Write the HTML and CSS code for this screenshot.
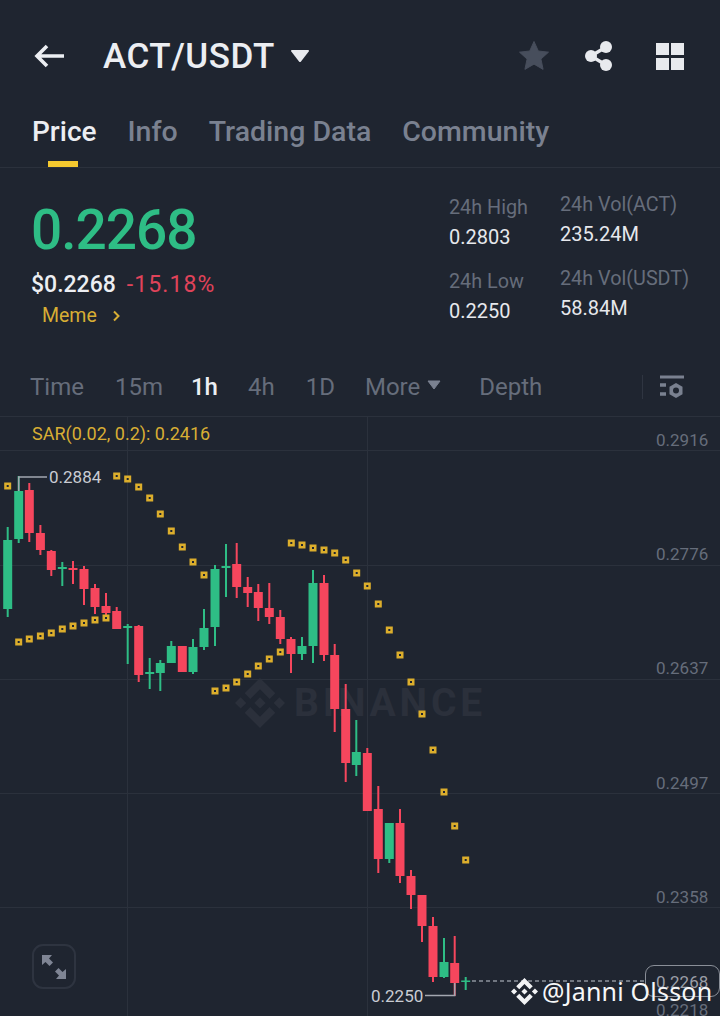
FILE: index.html
```html
<!DOCTYPE html>
<html lang="en">
  <head>
    <title>ACT/USDT</title>
    <meta charset="utf-8" />
    <meta name="viewport" content="width=device-width, initial-scale=1" />
    <link rel="stylesheet" href="styles.css">
  </head>

  <body>
    <header class="topbar">
      <svg class="back" width="32" height="26" viewBox="0 0 32 26">
        <path d="M30 13H4M13 3 3 13l10 10" fill="none" stroke="#eceef2" stroke-width="3.6" />
      </svg>
      <h1 class="pair">ACT/USDT</h1>
      <svg class="caret" width="20" height="14" viewBox="0 0 20 14">
        <path d="M2 1h16q1.500 0 .7 1.400L11 12.500q-1 1.200-2 0L1.300 2.400Q.5 1 2 1z" fill="#e8eaee" />
      </svg>
      <div class="actions">
        <svg class="star" width="30" height="31" viewBox="0 0 32 32">
          <path d="M16 1l4.600 10.200 10.900 1.200-8.100 7.400 2.300 11-9.700-5.600-9.700 5.600 2.300-11L.5 12.400l10.900-1.200z" fill="#474e5c" stroke="#474e5c" stroke-linejoin="round" />
        </svg>
        <svg class="share" width="29" height="32" viewBox="0 0 29 32">
          <path d="M22 7 7 16l15 9" fill="none" stroke="#e8eaee" stroke-width="3.4" />
          <circle cx="22" cy="7" r="6" fill="#e8eaee" />
          <circle cx="7" cy="16" r="6" fill="#e8eaee" />
          <circle cx="22" cy="25" r="6" fill="#e8eaee" />
        </svg>
        <div class="grid-icon"><i></i><i></i><i></i><i></i></div>
      </div>
    </header>

    <nav class="tabs">
      <a class="tab active">Price</a>
      <a class="tab">Info</a>
      <a class="tab">Trading Data</a>
      <a class="tab">Community</a>
    </nav>

    <section class="summary">
      <div class="quote">
        <div class="last">0.2268</div>
        <div class="fiat">
          <span class="usd">$0.2268</span>
          <span class="change">-15.18%</span>
        </div>
        <div class="tag">
          <span>Meme</span>
          <svg width="9" height="12" viewBox="0 0 9 12">
            <path d="M2 1.500 6.500 6 2 10.500" fill="none" stroke="#d8ae34" stroke-width="2" />
          </svg>
        </div>
      </div>
      <div class="stats">
        <div class="stat-col">
          <div class="stat">
            <span class="stat-label">24h High</span>
            <span class="stat-value">0.2803</span>
          </div>
          <div class="stat">
            <span class="stat-label">24h Low</span>
            <span class="stat-value">0.2250</span>
          </div>
        </div>
        <div class="stat-col col-vol">
          <div class="stat">
            <span class="stat-label">24h Vol(ACT)</span>
            <span class="stat-value">235.24M</span>
          </div>
          <div class="stat">
            <span class="stat-label">24h Vol(USDT)</span>
            <span class="stat-value">58.84M</span>
          </div>
        </div>
      </div>
    </section>

    <div class="intervals">
      <span class="iv iv-time">Time</span>
      <span class="iv iv-15m">15m</span>
      <span class="iv iv-1h active">1h</span>
      <span class="iv iv-4h">4h</span>
      <span class="iv iv-1d">1D</span>
      <span class="iv iv-more">More</span>
      <svg class="more-caret" width="14" height="10" viewBox="0 0 14 10">
        <path d="M1 1h12L7 9z" fill="#7a8190" stroke="#7a8190" stroke-linejoin="round" />
      </svg>
      <span class="iv iv-depth">Depth</span>
      <div class="iv-sep"></div>
      <svg width="24" height="24" viewBox="0 0 24 24">
        <path d="M0 2h24" stroke="#7a8190" stroke-width="3" />
        <path d="M0 10h6M0 19h6" stroke="#7a8190" stroke-width="3.500" />
        <path d="M16 8l6.500 3.800v7.400L16 23l-6.500-3.800v-7.400z" fill="#7a8190" />
        <circle cx="16" cy="15.500" r="3" fill="#1f2530" />
      </svg>
    </div>

    <div class="chart">
      <div class="watermark">
        <svg width="50" height="50" viewBox="0 0 24 24">
          <path class="bn" d="M16.624 13.920l2.718 2.715-7.353 7.353-7.353-7.352 2.718-2.716 4.635 4.659 4.636-4.659zm4.637-4.637L24 12l-2.715 2.716L18.568 12l2.693-2.716zm-9.272.001l2.716 2.691-2.716 2.718L9.272 12l2.717-2.716zm-9.272-.001L5.409 12l-2.691 2.692L0 12l2.717-2.716zM11.989.012l7.353 7.329-2.718 2.715-4.635-4.636-4.636 4.660-2.717-2.716 7.353-7.352z" />
        </svg>
        <span>BINANCE</span>
      </div>

      <svg id="plot" class="plot" width="720" height="599" viewBox="0 417 720 599"></svg>

      <div class="sar-label">SAR(0.02, 0.2): 0.2416</div>

      <div class="expand">
        <svg width="26" height="26" viewBox="0 0 26 26">
          <path d="M1 1h10L8 4.500l4 4L8.500 12l-4-4L1 11zM25 25H15l3-3.500-4-4 3.500-3.500 4 4L25 15z" fill="#7f8594" />
        </svg>
      </div>

      <div class="price-box">0.2268</div>

      <div class="credit">
        <svg width="27" height="27" viewBox="0 0 24 24">
          <path fill="#f2f3f5" d="M16.624 13.920l2.718 2.715-7.353 7.353-7.353-7.352 2.718-2.716 4.635 4.659 4.636-4.659zm4.637-4.637L24 12l-2.715 2.716L18.568 12l2.693-2.716zm-9.272.001l2.716 2.691-2.716 2.718L9.272 12l2.717-2.716zm-9.272-.001L5.409 12l-2.691 2.692L0 12l2.717-2.716zM11.989.012l7.353 7.329-2.718 2.715-4.635-4.636-4.636 4.660-2.717-2.716 7.353-7.352z" />
        </svg>
        <span>@Janni Olsson</span>
      </div>
    </div>

    <script src="chart.js"></script>
  </body>
</html>
```

FILE: styles.css
```css
* {
  box-sizing: border-box;
}

body {
  margin: 0;
  width: 720px;
  height: 1016px;
  overflow: hidden;
  background: #1f2530;
  color: #eceef2;
  font-family: Roboto, sans-serif;
}

.topbar {
  display: flex;
  align-items: center;
  height: 112px;
  padding: 0 36px 0 34px;
}

.pair {
  margin: 0 0 0 37px;
  font-size: 35px;
  font-weight: 500;
  letter-spacing: 0.5px;
}

.caret {
  margin-left: 15px;
}

.actions {
  display: flex;
  align-items: center;
  margin-left: auto;
}

.star {
  margin-bottom: 1px;
}

.share {
  margin: 0 43px 1px 35px;
}

.grid-icon {
  display: grid;
  grid-template-columns: 13px 13px;
  grid-template-rows: 12px 12px;
  gap: 3px 2px;
}

.grid-icon i {
  background: #e8eaee;
}

.tabs {
  display: flex;
  gap: 31px;
  height: 56px;
  padding: 3px 0 0 32px;
  border-bottom: 1px solid #2b313c;
}

.tab {
  position: relative;
  height: 40px;
  color: #7a8190;
  font-size: 28.5px;
  font-weight: 500;
}

.tab.active {
  color: #eceef2;
  font-size: 28px;
  line-height: 33px;
}

.tab.active::after {
  content: "";
  position: absolute;
  left: 16px;
  bottom: -12px;
  width: 30px;
  height: 6px;
  background: #f5c92f;
}

.summary {
  display: flex;
  justify-content: space-between;
  height: 192px;
  padding: 0 32px 0 31px;
}

.last {
  margin-top: 28px;
  color: #2ebd85;
  font-size: 55px;
  font-weight: 500;
  line-height: 68px;
  letter-spacing: -1px;
}

.fiat {
  display: flex;
  gap: 11px;
  margin-top: 8px;
  font-size: 23px;
  line-height: 26px;
}

.usd {
  font-weight: 500;
}

.change {
  color: #e0435a;
  letter-spacing: 1.100px;
}

.tag {
  display: flex;
  align-items: center;
  gap: 15px;
  margin: 6px 0 0 11px;
  color: #d8ae34;
  font-size: 19.500px;
  line-height: 24px;
}

.stats {
  display: flex;
  gap: 32px;
}

.stat-col {
  display: flex;
  flex-direction: column;
  gap: 20px;
  padding-top: 28px;
  width: 79px;
}

.col-vol {
  padding-top: 25px;
  width: 128px;
}

.stat {
  display: flex;
  flex-direction: column;
  gap: 4px;
}

.stat-label {
  color: #666d7b;
  font-size: 19.800px;
  line-height: 24px;
  white-space: nowrap;
}

.stat-value {
  font-size: 20px;
  line-height: 26px;
  color: #e6e8ec;
  white-space: nowrap;
}

.intervals {
  display: flex;
  align-items: center;
  height: 57px;
  padding: 0 36px 2px 30px;
  border-bottom: 1px solid #2b313c;
}

.iv {
  color: #666d7b;
  font-size: 24px;
}

.iv.active {
  color: #eceef2;
  font-weight: 500;
}

.iv-15m {
  margin-left: 31px;
}

.iv-1h {
  margin-left: 28px;
}

.iv-4h {
  margin-left: 30px;
}

.iv-1d {
  margin-left: 31px;
}

.iv-more {
  margin-left: 30px;
}

.more-caret {
  margin: 0 0 4px 7px;
}

.iv-depth {
  margin-left: 38px;
}

.iv-sep {
  width: 1px;
  height: 24px;
  margin: 0 17px 0 auto;
  background: #2f3541;
}

.chart {
  position: relative;
  height: 599px;
}

.plot {
  position: absolute;
  left: 0;
  top: 0;
}

.grid-line {
  stroke: #2b313c;
  stroke-width: 1;
}

.axis-text {
  fill: #666d7b;
  font-size: 17px;
}

.mark-text {
  fill: #c9ccd3;
  font-size: 17px;
}

.mark-line {
  fill: none;
  stroke: #a3a7b0;
  stroke-width: 1.500;
}

.sar-dot {
  fill: #1f2530;
  stroke: #dcae2c;
  stroke-width: 2.500;
}

.sar-label {
  position: absolute;
  left: 32px;
  top: 6px;
  color: #d8ae34;
  font-size: 18px;
}

.watermark {
  position: absolute;
  left: 235px;
  top: 261px;
  display: flex;
  align-items: center;
  gap: 9px;
  color: #2b303b;
  font-size: 39px;
  font-weight: 700;
  letter-spacing: 3.800px;
}

.bn {
  fill: #2b303b;
}

.expand {
  position: absolute;
  left: 32px;
  top: 527px;
  display: flex;
  align-items: center;
  justify-content: center;
  width: 44px;
  height: 45px;
  border: 2px solid #2e3440;
  border-radius: 11px;
}

.price-box {
  position: absolute;
  left: 645px;
  top: 548px;
  width: 75px;
  height: 32px;
  padding-left: 10px;
  border: 1.500px solid #8a8f98;
  border-radius: 9px;
  color: #9a9ea7;
  font-size: 17px;
  line-height: 33px;
}

.credit {
  position: absolute;
  left: 511px;
  top: 557px;
  display: flex;
  align-items: center;
  gap: 4px;
  color: #f6f7f8;
  font-family: "Noto Sans", sans-serif;
  font-size: 25px;
  letter-spacing: 0.200px;
}
```

FILE: chart.js
```js
const SVG_NS = "http://www.w3.org/2000/svg";
const plot = document.querySelector("#plot");

const GREEN = "#2ebd85";
const RED = "#f6465d";

// x, wick top, body top, body bottom, wick bottom
const greens = [
  [7.7, 527, 540, 609, 617],
  [18.7, 476, 491, 539, 543],
  [62.3, 562, 567, 569, 586],
  [127.7, 624, 626, 628, 664],
  [149.7, 658, 672, 674, 689],
  [160.3, 660, 663, 673, 691],
  [171.3, 641, 646, 663, 663],
  [193, 639, 647, 672, 674],
  [204, 609, 628, 647, 650],
  [215, 565, 569, 627, 646],
  [226, 544, 566, 568, 597],
  [302, 637, 646, 654, 660],
  [313, 570, 583, 646, 663],
  [356.3, 720, 752, 765, 776],
  [389.3, 823, 823, 859, 863],
  [444, 938, 962, 977, 978],
  [465.7, 977, 980.5, 982, 990],
];

const reds = [
  [29.3, 483, 490, 533, 542],
  [40.4, 525, 533, 550, 555],
  [51.3, 550, 551, 570, 576],
  [73, 561, 568, 570, 584],
  [84, 566, 569, 589, 605],
  [95, 584, 588, 607, 614],
  [106, 593, 606, 613, 615],
  [116.7, 607, 611, 629, 629],
  [138.7, 625, 626, 675, 682],
  [182.3, 646, 646, 672, 672],
  [236.7, 543, 564, 587, 598],
  [247.7, 577, 587, 593, 607],
  [258.3, 584, 592, 608, 621],
  [269.3, 583, 608, 617, 624],
  [280.3, 610, 617, 639, 644],
  [291, 637, 639, 654, 673],
  [324, 575, 583, 655, 661],
  [334.7, 644, 655, 709, 732],
  [345.7, 684, 709, 763, 782],
  [367.3, 748, 753, 811, 811],
  [378.3, 786, 809, 859, 873],
  [400, 809, 823, 876, 883],
  [411, 870, 876, 895, 909],
  [422, 895, 895, 926, 942],
  [433, 917, 926, 977, 982],
  [454.7, 936, 963, 983, 996],
];

const sarDots = [
  [7.7, 486], [18.7, 642], [29.3, 639], [40.4, 636], [51.3, 633], [62.3, 629],
  [73, 626], [84, 623], [95, 620], [106, 618], [116.7, 476], [127.7, 479],
  [138.7, 487], [149.7, 498], [160.3, 514], [171.3, 531], [182.3, 547],
  [193, 562], [204, 575], [215, 691], [226, 688], [236.7, 682], [247.7, 674],
  [258.3, 666], [269.3, 659], [280.3, 652], [291.3, 543], [302, 545],
  [313, 548], [324, 550], [334.7, 553], [345.7, 560], [356.7, 573],
  [367.3, 586], [378.3, 604], [389.3, 630], [400, 655], [411, 682],
  [422, 714], [433, 750], [444, 792], [454.7, 826], [465.7, 860],
];

function add(tag, attrs, text) {
  const el = document.createElementNS(SVG_NS, tag);
  for (const key in attrs) el.setAttribute(key, attrs[key]);
  if (text) el.textContent = text;
  plot.appendChild(el);
  return el;
}

// grid
[450.5, 565.5, 679.5, 793.5, 907.5].forEach((y) => {
  add("line", { class: "grid-line", x1: 0, x2: 720, y1: y, y2: y });
});
[127.5, 367.5].forEach((x) => {
  add("line", { class: "grid-line", x1: x, x2: x, y1: 417, y2: 1016 });
});

// axis prices
[
  ["0.2916", 446],
  ["0.2776", 560],
  ["0.2637", 674],
  ["0.2497", 789],
  ["0.2358", 903],
  ["0.2218", 1016],
].forEach(([label, y]) => {
  add("text", { class: "axis-text", x: 656, y }, label);
});

function drawCandles(list, color) {
  list.forEach(([x, wickTop, bodyTop, bodyBottom, wickBottom]) => {
    add("rect", { x: x - 1, y: wickTop, width: 2, height: wickBottom - wickTop, fill: color });
    add("rect", { x: x - 4.5, y: bodyTop, width: 9, height: bodyBottom - bodyTop, fill: color });
  });
}

drawCandles(greens, GREEN);
drawCandles(reds, RED);

sarDots.forEach(([x, y]) => {
  add("rect", { class: "sar-dot", x: x - 2.25, y: y - 2.25, width: 4.5, height: 4.5 });
});

// high and low marks
add("path", { class: "mark-line", d: "M18.700 491V477H47" });
add("text", { class: "mark-text", x: 49, y: 483 }, "0.2884");
add("path", { class: "mark-line", d: "M425 995.500H454.700V983" });
add("text", { class: "mark-text", x: 371, y: 1002 }, "0.2250");

// last price
add("line", {
  x1: 472, x2: 645, y1: 981, y2: 981,
  stroke: "#8d929c", "stroke-width": 1.5, "stroke-dasharray": "4 3",
});
```
